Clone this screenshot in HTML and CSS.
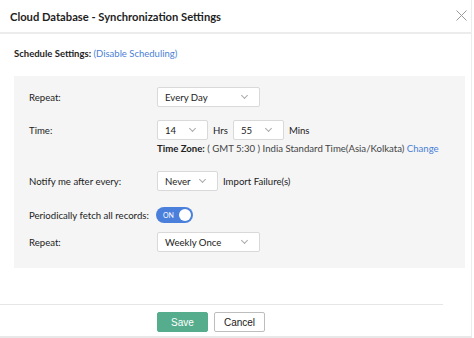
FILE: index.html
```html
<!DOCTYPE html>
<html>
<head>
<meta charset="utf-8">
<link rel="stylesheet" href="styles.css">
</head>
<body>
<div class="dialog">
  <div class="header">
    <span class="title">Cloud Database - Synchronization Settings</span>
    <svg class="close" width="11" height="11" viewBox="0 0 11 11"><path d="M0.5 0.5 L10.5 10.5 M10.5 0.5 L0.5 10.5" stroke="#9a9a9a" stroke-width="1" fill="none"/></svg>
  </div>
  <div class="body">
    <div class="sched"><b>Schedule Settings:</b> <a class="link">(Disable Scheduling)</a></div>
    <div class="panel">
      <div class="row r1">
        <div class="label">Repeat:</div>
        <div class="select w103"><span>Every Day</span><i class="chev"></i></div>
      </div>
      <div class="row r2">
        <div class="label">Time:</div>
        <div class="select w51"><span>14</span><i class="chev"></i></div>
        <span class="unit">Hrs</span>
        <div class="select w51"><span>55</span><i class="chev"></i></div>
        <span class="unit">Mins</span>
      </div>
      <div class="tz"><b>Time Zone:</b> ( GMT 5:30 ) India Standard Time(Asia/Kolkata) <a class="link">Change</a></div>
      <div class="row r3">
        <div class="label">Notify me after every:</div>
        <div class="select w61"><span>Never</span><i class="chev"></i></div>
        <span class="unit">Import Failure(s)</span>
      </div>
      <div class="row r4">
        <div class="label">Periodically fetch all records:</div>
        <div class="toggle"><span>ON</span><i class="knob"></i></div>
      </div>
      <div class="row r5">
        <div class="label">Repeat:</div>
        <div class="select w103"><span>Weekly Once</span><i class="chev"></i></div>
      </div>
    </div>
  </div>
  <div class="footer">
    <button class="btn save">Save</button>
    <button class="btn cancel">Cancel</button>
  </div>
</div>
</body>
</html>
```
FILE: styles.css
```css
html, body { margin: 0; padding: 0; background: #fff; }
body { font-family: Lato, "Open Sans", sans-serif; color: #333; width: 474px; height: 338px; overflow: hidden; }
.dialog { width: 471px; height: 336px; border-right: 1px solid #ececec; border-bottom: 2px solid #e8e8e8; box-sizing: content-box; position: relative; }
.header { height: 32px; border-bottom: 2px solid #ececec; display: flex; align-items: center; justify-content: space-between; padding: 0 4px 0 10px; }
.title { font-weight: bold; font-size: 11.2px; color: #1e1e1e; }
.close { margin-top: -2px; }
.body { padding: 13px 0 0 14px; }
.sched { font-size: 9.5px; height: 14px; line-height: 14px; color: #1e1e1e; }
.sched b { font-weight: bold; }
.link { color: #4a7fd6; }
.panel { margin-top: 15px; width: 451px; background: #f5f5f5; padding: 11px 0 16px 0; box-sizing: border-box; font-size: 9.6px; }
.row { display: flex; align-items: center; }
.label { width: 143px; padding-left: 15px; box-sizing: border-box; flex: none; color: #222; white-space: nowrap; }
.r1 { height: 20px; }
.r2 { height: 20px; margin-top: 13px; }
.r3 { height: 20px; margin-top: 16px; }
.r4 { height: 16px; margin-top: 16px; }
.r5 { height: 20px; margin-top: 9px; }
.tz { margin: 3px 0 0 143px; height: 12px; line-height: 12px; color: #444; }
.tz b { color: #222; }
.select { height: 20px; background: #fff; border: 1px solid #d9d9d9; border-radius: 2px; box-sizing: border-box; display: flex; align-items: center; justify-content: space-between; padding: 0 12px 0 7px; color: #222; }
.w103 { width: 103px; }
.w51 { width: 51px; }
.w61 { width: 61px; }
.chev { width: 4px; height: 4px; border-right: 1px solid #aaa; border-bottom: 1px solid #aaa; transform: rotate(45deg); margin-top: -3px; }
.unit { margin: 0 5px 0 5px; color: #222; }
.toggle { width: 37px; height: 16px; border-radius: 8px; background: #4a80dc; margin-left: -1px; display: flex; align-items: center; justify-content: space-between; padding: 0 2px 0 7px; box-sizing: border-box; }
.toggle span { color: #fff; font-size: 7px; }
.knob { width: 12px; height: 12px; border-radius: 50%; background: #fff; }
.footer { position: absolute; left: 0; top: 304px; width: 443px; border-top: 1px solid #e6e6e6; padding: 7px 0 0 157px; box-sizing: border-box; display: flex; gap: 6px; }
.btn { width: 51px; height: 20px; font-family: "Liberation Sans", Arial, sans-serif; font-size: 10px; border-radius: 2px; padding: 0; }
.save { background: #55ad8d; color: #fff; border: 1px solid #55ad8d; }
.cancel { background: #fff; color: #222; border: 1px solid #bdbdbd; }
```
